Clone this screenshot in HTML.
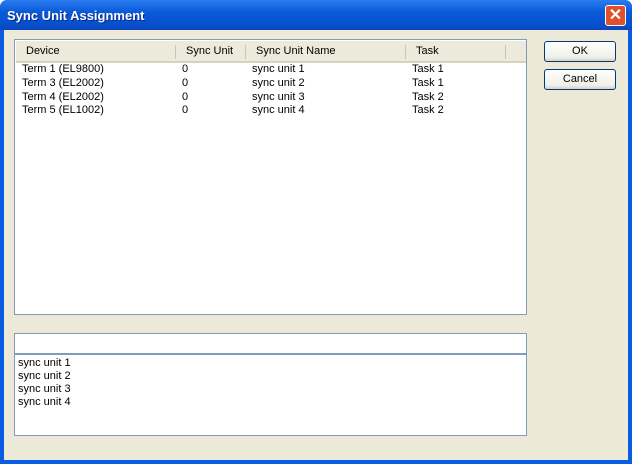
<!DOCTYPE html><html><head><style>
body{margin:0;width:632px;height:464px;overflow:hidden;font-family:"Liberation Sans",sans-serif;font-size:11px;}
.win{position:absolute;left:0;top:0;width:632px;height:464px;background:#0a5ce0;border-radius:7px 7px 0 0;}
.title{position:absolute;left:0;top:0;width:632px;height:30px;background:linear-gradient(#2a7cf0,#0a5ad8 40%,#0650d0 80%,#0a46b8);border-radius:7px 7px 0 0;}
.title span{position:absolute;left:7px;top:8px;color:#fff;font-weight:bold;font-size:13px;text-shadow:1px 1px #0a2a80;}
.x{position:absolute;left:605px;top:5px;width:21px;height:21px;background:#e0502a;border:1px solid #fff;border-radius:3px;box-sizing:border-box;color:#fff;font-size:16px;font-weight:bold;text-align:center;line-height:19px;}
.body{position:absolute;left:4px;top:30px;width:624px;height:430px;background:#ece9d8;}
.box{position:absolute;background:#fff;border:1px solid #7f9db9;}
.hdr{position:absolute;left:1px;top:1px;right:0;height:20px;background:#ebeadb;border-bottom:2px solid #d6d2c2;}
.hdr div{position:absolute;top:4px;white-space:nowrap;}
.sep{position:absolute;top:3px;width:1px;height:14px;background:#c8c4b4;}
.row{position:absolute;left:0;right:0;height:13px;}
.row span{position:absolute;white-space:nowrap;}
.btn{position:absolute;left:540px;width:72px;height:21px;border:1px solid #003c74;border-radius:3px;background:linear-gradient(#fff,#f0f0ea 80%,#d6d0c5);box-sizing:border-box;text-align:center;line-height:19px;}
</style></head><body>
<div class="win"><div class="title"><span>Sync Unit Assignment</span><div class="x">✕</div></div>
<div class="body">
<div class="box" style="left:10px;top:9px;width:511px;height:274px;">
<div class="hdr">
<div style="left:10px">Device</div><div class="sep" style="left:159px"></div>
<div style="left:170px">Sync Unit</div><div class="sep" style="left:229px"></div>
<div style="left:240px">Sync Unit Name</div><div class="sep" style="left:389px"></div>
<div style="left:400px">Task</div><div class="sep" style="left:489px"></div>
</div>
<div class="row" style="top:23px"><span style="left:7px">Term 1 (EL9800)</span><span style="left:167px">0</span><span style="left:237px">sync unit 1</span><span style="left:397px">Task 1</span></div>
<div class="row" style="top:37px"><span style="left:7px">Term 3 (EL2002)</span><span style="left:167px">0</span><span style="left:237px">sync unit 2</span><span style="left:397px">Task 1</span></div>
<div class="row" style="top:51px"><span style="left:7px">Term 4 (EL2002)</span><span style="left:167px">0</span><span style="left:237px">sync unit 3</span><span style="left:397px">Task 2</span></div>
<div class="row" style="top:64px"><span style="left:7px">Term 5 (EL1002)</span><span style="left:167px">0</span><span style="left:237px">sync unit 4</span><span style="left:397px">Task 2</span></div>
</div>
<div class="box" style="left:10px;top:303px;width:511px;height:101px;">
<div style="position:absolute;left:0;top:19px;width:511px;height:2px;background:#7f9db9"></div>
<div style="position:absolute;left:3px;top:23px;line-height:13px">sync unit 1<br>sync unit 2<br>sync unit 3<br>sync unit 4</div>
</div>
<div class="btn" style="top:11px">OK</div>
<div class="btn" style="top:39px">Cancel</div>
</div></div>
</body></html>
